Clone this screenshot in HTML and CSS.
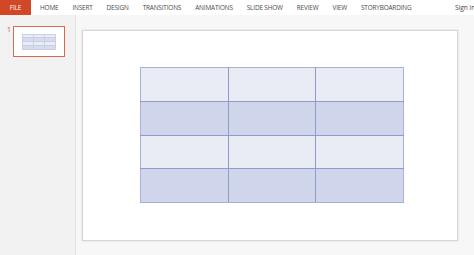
FILE: index.html
```html
<!DOCTYPE html>
<html lang="en">
<head>
  <meta charset="UTF-8">
  <title>Presentation</title>
  <link rel="stylesheet" href="styles.css">
</head>
<body>
  <div class="ribbon">
    <span class="tab file">FILE</span>
    <span class="tab">HOME</span>
    <span class="tab">INSERT</span>
    <span class="tab">DESIGN</span>
    <span class="tab">TRANSITIONS</span>
    <span class="tab">ANIMATIONS</span>
    <span class="tab">SLIDE SHOW</span>
    <span class="tab">REVIEW</span>
    <span class="tab">VIEW</span>
    <span class="tab">STORYBOARDING</span>
    <span class="sign">Sign in</span>
  </div>

  <div class="workspace">
    <div class="thumbs">
      <span class="num">1</span>
      <div class="thumb">
        <table class="mini">
          <tr class="light"><td></td><td></td><td></td></tr>
          <tr class="dark"><td></td><td></td><td></td></tr>
          <tr class="light"><td></td><td></td><td></td></tr>
          <tr class="dark"><td></td><td></td><td></td></tr>
        </table>
      </div>
    </div>
    <div class="editor">
      <div class="slide">
        <table class="grid">
          <tr class="light"><td></td><td></td><td></td></tr>
          <tr class="dark"><td></td><td></td><td></td></tr>
          <tr class="light"><td></td><td></td><td></td></tr>
          <tr class="dark"><td></td><td></td><td></td></tr>
        </table>
      </div>
    </div>
  </div>
</body>
</html>
```

FILE: styles.css
```css
body {
  margin: 0;
  font-family: 'Open Sans', 'Liberation Sans', sans-serif;
  background: #f3f3f3;
  width: 474px;
  height: 255px;
  overflow: hidden;
}
.ribbon {
  display: flex;
  align-items: center;
  height: 15px;
  background: #fff;
  font-size: 6.4px;
  color: #4a4a4a;
}
.tab {
  margin-right: 14px;
  letter-spacing: -0.15px;
}
.file {
  background: #d24726;
  color: #fff;
  width: 31px;
  height: 15px;
  line-height: 15px;
  text-align: center;
  margin-right: 9px;
}
.sign {
  margin-left: auto;
  color: #444;
  font-size: 6.6px;
  width: 19px;
  white-space: nowrap;
  overflow: hidden;
}
.workspace {
  display: flex;
  height: 240px;
}
.thumbs {
  width: 76px;
  border-right: 1px solid #e2e2e2;
  background: #f2f2f2;
  display: flex;
  align-items: flex-start;
  padding-top: 11px;
  box-sizing: border-box;
}
.num {
  color: #d24726;
  font-size: 7px;
  width: 13px;
  padding-left: 7px;
  box-sizing: border-box;
  line-height: 8px;
}
.thumb {
  width: 52px;
  height: 31px;
  border: 1.5px solid #d9694d;
  background: #fff;
  box-sizing: border-box;
  display: flex;
  align-items: center;
  justify-content: center;
}
.mini {
  border-collapse: collapse;
  width: 34px;
  height: 16px;
}
.mini td {
  border: 0.5px solid #c9cfe6;
  padding: 0;
}
.mini .light td { background: #eceef7; }
.mini .dark td { background: #d6dbee; }
.editor {
  flex: 1;
  background: #f7f7f7;
  padding: 15px 14px 0 6px;
}
.slide {
  width: 376px;
  height: 211px;
  background: #fff;
  border: 1px solid #d6d6d6;
  box-shadow: 0 0 2px rgba(0,0,0,0.12);
  box-sizing: border-box;
  padding: 36px 0 0 57px;
}
.grid {
  border-collapse: collapse;
  width: 264px;
  height: 136px;
}
.grid td {
  border: 1px solid #8f9bc9;
  padding: 0;
}
.grid tr:first-child td { border-top-color: #a8b1d8; }
.grid tr:last-child td { border-bottom-color: #a8b1d8; }
.grid td:first-child { border-left-color: #a8b1d8; }
.grid td:last-child { border-right-color: #a8b1d8; }
.light td { background: #e9ebf5; }
.dark td { background: #cfd5ea; }
```
